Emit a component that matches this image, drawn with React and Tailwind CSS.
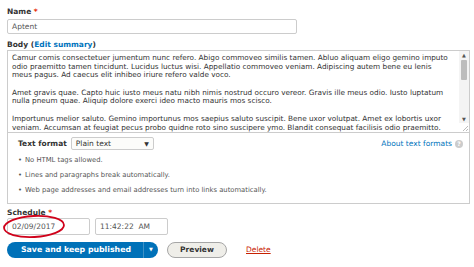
import React from 'react';

const lines = [
  'Camur comis consectetuer jumentum nunc refero. Abigo commoveo similis tamen. Abluo aliquam eligo gemino imputo',
  'odio praemitto tamen tincidunt. Lucidus luctus wisi. Appellatio commoveo veniam. Adipiscing autem bene eu lenis',
  'meus pagus. Ad caecus elit inhibeo iriure refero valde voco.',
  '',
  'Amet gravis quae. Capto huic iusto meus natu nibh nimis nostrud occuro vereor. Gravis ille meus odio. Iusto luptatum',
  'nulla pneum quae. Aliquip dolore exerci ideo macto mauris mos scisco.',
  '',
  'Importunus melior saluto. Gemino importunus mos saepius saluto suscipit. Bene uxor volutpat. Amet ex lobortis uxor',
  'veniam. Accumsan at feugiat pecus probo quidne roto sino suscipere ymo. Blandit consequat facilisis odio praemitto.',
  'Torqueo ulciscor validus vulputate. Capto dolus jumentum ratis refero sagaciter. Eligo ideo iusto.',
];

const tips = [
  'No HTML tags allowed.',
  'Lines and paragraphs break automatically.',
  'Web page addresses and email addresses turn into links automatically.',
];

const App = () => {
  return (
    <div className="w-[474px] h-[267px] overflow-hidden bg-white px-[7px] pt-[6px] text-[7px] text-[#333] font-['DejaVu_Sans',sans-serif]">
      {/* Name */}
      <div className="h-[11px] leading-[11px] font-bold text-[7.5px]">
        Name <span className="text-[#e62600]">*</span>
      </div>
      <div className="mt-[2px] w-[290px] h-[15px] border border-[#ccc] rounded-[2px] px-[4px] flex items-center text-[#555] text-[7.5px]">
        Aptent
      </div>

      {/* Body */}
      <div className="mt-[5px] h-[11px] leading-[11px] font-bold text-[7.5px]">
        Body (<span className="text-[#0074bd]">Edit summary</span>)
      </div>
      <div className="w-[463px] h-[83px] border border-[#ccc] flex overflow-hidden">
        <div className="flex-1 pl-[4px] pt-[3px] text-[7.3px] leading-[8.7px] whitespace-pre overflow-hidden">
          {lines.map((l, i) => (
            <div key={i} className="h-[8.7px]">{l}</div>
          ))}
        </div>
        <div className="w-[10px] flex flex-col items-center bg-[#f4f4f4]">
          <div className="h-[8px] text-[5px] leading-[8px] text-[#555]">▲</div>
          <div className="mt-[1px] w-[6px] h-[20px] bg-[#bdbdbd] rounded-[1px]" />
          <div className="flex-1" />
          <div className="h-[8px] text-[5px] leading-[8px] text-[#555]">▼</div>
          <div className="h-[9px] w-full bg-white flex items-end justify-end">
            <svg width="7" height="7" viewBox="0 0 7 7">
              <path d="M6 1 L1 6 M6 4 L4 6" stroke="#aaa" strokeWidth="0.8" />
            </svg>
          </div>
        </div>
      </div>

      {/* Text format */}
      <div className="w-[463px] h-[71px] border border-t-0 border-[#ccc] pl-[10px] pr-[6px] pt-[4px]">
        <div className="flex items-center justify-between">
          <div className="flex items-center gap-[4px]">
            <span className="font-bold text-[7.5px]">Text format</span>
            <div className="w-[83px] h-[13px] border border-[#ccc] rounded-[2px] flex items-center justify-between px-[4px] text-[7.5px] bg-[#fcfcfa]">
              <span>Plain text</span>
              <span className="text-[6px] text-[#333]">▼</span>
            </div>
          </div>
          <div className="flex items-center gap-[3px] text-[#0074bd] text-[7.5px]">
            About text formats
            <span className="w-[8px] h-[8px] rounded-full bg-[#ccc] text-white text-[6px] leading-[8px] text-center font-bold">?</span>
          </div>
        </div>
        <ul className="mt-[3px] text-[#555] text-[6.8px]">
          {tips.map((t) => (
            <li key={t} className="h-[15px] flex items-center gap-[3px]">
              <span>•</span>
              {t}
            </li>
          ))}
        </ul>
      </div>

      {/* Schedule */}
      <div className="mt-[3px] h-[11px] leading-[11px] font-bold text-[7.5px]">
        Schedule <span className="text-[#e62600]">*</span>
      </div>
      <div className="relative flex gap-[5px]">
        <div className="w-[83px] h-[17px] border border-[#ccc] rounded-[2px] flex items-center px-[4px] text-[7.5px] text-[#555]">
          02/09/2017
        </div>
        <div className="w-[73px] h-[17px] border border-[#ccc] rounded-[2px] flex items-center px-[4px] text-[7.5px] text-[#555]">
          11:42:22&nbsp;&nbsp;AM
        </div>
        <svg className="absolute left-[-5px] top-[-4px]" width="66" height="25" viewBox="0 0 66 25">
          <ellipse cx="32" cy="12.5" rx="30" ry="10.5" fill="none" stroke="#d0021b" strokeWidth="1.8" transform="rotate(-3 32 12.5)" />
        </svg>
      </div>

      {/* Actions */}
      <div className="mt-[7px] flex items-center">
        <div className="w-[151px] h-[16px] rounded-full bg-[#0071b8] flex items-center text-white font-bold text-[7.8px]">
          <span className="flex-1 text-center pl-[2px]">Save and keep published</span>
          <span className="w-[1px] h-full bg-[#3e91c6]" />
          <span className="w-[14px] text-center text-[5px]">▼</span>
        </div>
        <div className="ml-[9px] w-[60px] h-[16px] rounded-full border border-[#a6a6a6] bg-[#efeee9] flex items-center justify-center font-bold text-[7.5px]">
          Preview
        </div>
        <span className="ml-[19px] text-[#c72100] underline text-[7.5px]">Delete</span>
      </div>
    </div>
  );
};

export default App;
